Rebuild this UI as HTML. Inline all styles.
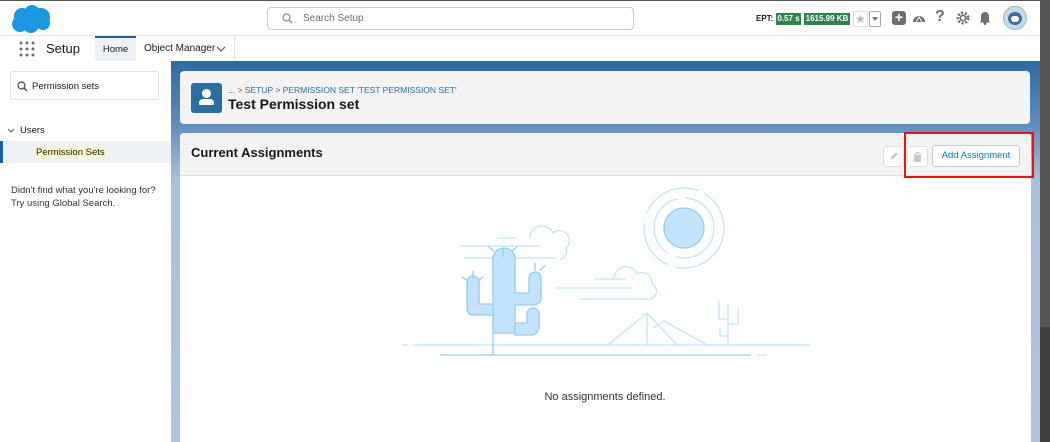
<!DOCTYPE html>
<html><head><meta charset="utf-8"><style>
*{box-sizing:border-box;margin:0;padding:0}
body{width:1050px;height:442px;overflow:hidden;position:relative;background:#fff;font-family:"Liberation Sans",sans-serif;color:#181818}
.abs{position:absolute}
</style></head><body>
<div class="abs" style="left:0;top:0;width:1050px;height:1px;background:#555"></div>
<div class="abs" style="left:0;top:1px;width:1040px;height:35px;background:#fff;border-bottom:1px solid #e5e5e5"></div>
<svg class="abs" style="left:10px;top:4px" width="42" height="30" viewBox="0 0 42 30"><g fill="#1b96e0"><circle cx="12" cy="12" r="8"/><circle cx="22" cy="9" r="8"/><circle cx="31" cy="13" r="9"/><circle cx="10" cy="20" r="8"/><circle cx="21" cy="21" r="8"/><circle cx="33" cy="19" r="7"/></g></svg>
<div class="abs" style="left:267px;top:7px;width:367px;height:23px;border:1px solid #c9c9c9;border-radius:4px"></div>
<svg class="abs" style="left:282px;top:13px" width="11" height="11" viewBox="0 0 11 11"><circle cx="4.5" cy="4.5" r="3.5" fill="none" stroke="#888" stroke-width="1.2"/><path d="M7 7l3 3" stroke="#888" stroke-width="1.3"/></svg>
<div class="abs" style="left:303px;top:13px;font-size:10px;color:#706e6b">Search Setup</div>
<div class="abs" style="left:756px;top:14px;font-size:8px;font-weight:bold">EPT:</div>
<div class="abs" style="left:776px;top:13px;width:25px;height:12px;background:#2e844a;color:#fff;font-size:8px;font-weight:bold;text-align:center;line-height:12px">0.57 s</div>
<div class="abs" style="left:804px;top:13px;width:46px;height:12px;background:#2e844a;color:#fff;font-size:8px;font-weight:bold;text-align:center;line-height:12px">1615.99 KB</div>
<div class="abs" style="left:853px;top:11px;width:15px;height:16px;border:1px solid #ddd;color:#bbb;font-size:12px;text-align:center;line-height:14px">★</div>
<div class="abs" style="left:869px;top:11px;width:12px;height:16px;border:1px solid #aaa;border-radius:2px"></div>
<div class="abs" style="left:872px;top:17px;border-left:3px solid transparent;border-right:3px solid transparent;border-top:4px solid #777"></div>
<div class="abs" style="left:892px;top:11px;width:14px;height:14px;background:#706e6b;border-radius:3px;color:#fff;font-size:14px;line-height:13px;text-align:center;font-weight:bold">+</div>
<svg class="abs" style="left:911px;top:10px" width="16" height="15" viewBox="0 0 16 15"><path d="M2 12a6 6 0 0112 0z" fill="#706e6b"/><path d="M5 12l3-5 3 5" stroke="#fff" fill="none"/></svg>
<div class="abs" style="left:935px;top:8px;font-size:16px;color:#706e6b;font-weight:bold">?</div>
<svg class="abs" style="left:956px;top:11px" width="14" height="14" viewBox="0 0 14 14"><circle cx="7" cy="7" r="5" fill="none" stroke="#706e6b" stroke-width="3" stroke-dasharray="2 1.6"/><circle cx="7" cy="7" r="2.5" fill="none" stroke="#706e6b" stroke-width="1.5"/></svg>
<svg class="abs" style="left:978px;top:10px" width="14" height="15" viewBox="0 0 14 15"><path d="M3 11V6a4 4 0 018 0v5l1.5 1.5h-11z" fill="#706e6b"/><circle cx="7" cy="13.5" r="1.5" fill="#706e6b"/></svg>
<div class="abs" style="left:1003px;top:6px;width:24px;height:24px;border-radius:50%;background:#c5d9ee;border:1px solid #9bb"></div>
<div class="abs" style="left:1008px;top:12px;width:14px;height:13px;border-radius:50%;background:#3a6f9c"></div>
<div class="abs" style="left:1011px;top:16px;width:8px;height:6px;border-radius:3px;background:#fff"></div>
<svg class="abs" style="left:19px;top:41px" width="16" height="16" viewBox="0 0 16 16" fill="#706e6b"><circle cx="2" cy="2" r="1.5"/><circle cx="8" cy="2" r="1.5"/><circle cx="14" cy="2" r="1.5"/><circle cx="2" cy="8" r="1.5"/><circle cx="8" cy="8" r="1.5"/><circle cx="14" cy="8" r="1.5"/><circle cx="2" cy="14" r="1.5"/><circle cx="8" cy="14" r="1.5"/><circle cx="14" cy="14" r="1.5"/></svg>
<div class="abs" style="left:46px;top:41px;font-size:13px">Setup</div>
<div class="abs" style="left:95px;top:36px;width:41px;height:25px;background:#eef1f5;border-top:2px solid #1b5f9e;font-size:9.5px;text-align:center;line-height:23px">Home</div>
<div class="abs" style="left:144px;top:43px;font-size:10px">Object Manager</div>
<svg class="abs" style="left:216px;top:46px" width="10" height="6" viewBox="0 0 10 6"><path d="M1 1l4 4 4-4" fill="none" stroke="#555" stroke-width="1.2"/></svg>
<div class="abs" style="left:234px;top:36px;width:1px;height:25px;background:#e5e5e5"></div>
<div class="abs" style="left:10px;top:71px;width:149px;height:29px;border:1px solid #e0e0e0;border-radius:3px"></div>
<svg class="abs" style="left:17px;top:81px" width="11" height="11" viewBox="0 0 11 11"><circle cx="4.5" cy="4.5" r="3.5" fill="none" stroke="#444" stroke-width="1.2"/><path d="M7 7l3 3" stroke="#444" stroke-width="1.3"/></svg>
<div class="abs" style="left:32px;top:81px;font-size:9.5px">Permission sets</div>
<svg class="abs" style="left:7px;top:128px" width="8" height="6" viewBox="0 0 8 6"><path d="M1 1l3 3 3-3" fill="none" stroke="#555" stroke-width="1"/></svg>
<div class="abs" style="left:20px;top:125px;font-size:9.5px">Users</div>
<div class="abs" style="left:0;top:141px;width:171px;height:22px;background:#eef1f5;border-left:3px solid #1b5f9e"></div>
<div class="abs" style="left:36px;top:147px;font-size:9.5px;background:#fbf8c0">Permission Sets</div>
<div class="abs" style="left:11px;top:184px;font-size:9.5px;line-height:13px;color:#333">Didn't find what you're looking for?<br>Try using Global Search.</div>
<div class="abs" style="left:171px;top:61px;width:869px;height:381px;background:linear-gradient(#2e6aa3 0px,#5c8bbd 60px,#a9c0df 120px,#b0c4e0 381px)"></div>
<div class="abs" style="left:1040px;top:0;width:10px;height:327px;background:#555"></div>
<div class="abs" style="left:1040px;top:327px;width:10px;height:115px;background:#3f3f3f"></div>
<div class="abs" style="left:180px;top:71px;width:850px;height:53px;background:#f3f3f3;border-radius:4px"></div>
<div class="abs" style="left:191px;top:83px;width:31px;height:30px;background:#2a6d9e;border-radius:3px"></div>
<div class="abs" style="left:202px;top:89px;width:9px;height:9px;border-radius:50%;background:#fff"></div>
<div class="abs" style="left:199px;top:99px;width:15px;height:6px;border-radius:4px 4px 1px 1px;background:#fff"></div>
<div class="abs" style="left:228px;top:85px;font-size:8.5px;color:#2a6d9e"><span style="color:#555">... &gt; </span>SETUP<span style="color:#555"> &gt; </span>PERMISSION SET 'TEST PERMISSION SET'</div>
<div class="abs" style="left:228px;top:96px;font-size:14px;font-weight:bold">Test Permission set</div>
<div class="abs" style="left:180px;top:133px;width:851px;height:309px;background:#fff;border-radius:4px 4px 0 0;overflow:hidden">
  <div style="height:43px;background:#f3f3f3;border-bottom:1px solid #ddd"></div>
</div>
<div class="abs" style="left:191px;top:145px;font-size:13px;font-weight:bold">Current Assignments</div>
<div class="abs" style="left:883px;top:146px;width:21px;height:21px;border:1px solid #e0e0e0;border-radius:3px;background:#fff"></div>
<svg class="abs" style="left:888px;top:151px" width="11" height="11" viewBox="0 0 11 11"><path d="M2 9l1-3 5-5 2 2-5 5z" fill="#c9c9c9"/></svg>
<div class="abs" style="left:907px;top:146px;width:21px;height:21px;border:1px solid #e0e0e0;border-radius:3px;background:#fff"></div>
<svg class="abs" style="left:913px;top:152px" width="9" height="10" viewBox="0 0 9 10"><path d="M0 1.5h9M3 1.5V0h3v1.5M1 3h7l-.6 7H1.6z" fill="#c9c9c9" stroke="#c9c9c9" stroke-width=".6"/></svg>
<div class="abs" style="left:932px;top:145px;width:88px;height:22px;border:1px solid #c9c9c9;border-radius:3px;background:#fff;font-size:9.5px;color:#0176d3;text-align:center;line-height:20px">Add Assignment</div>
<div class="abs" style="left:904px;top:132px;width:130px;height:46px;border:2px solid #e4141d"></div>
<svg class="abs" style="left:390px;top:180px" width="430" height="180" viewBox="0 0 430 180" fill="none" stroke-linecap="round">
 <g stroke="#c2e3fb" stroke-width="1.3">
  <path d="M12 165h6M24 165h396"/>
  <path d="M368 175h8"/>
  <circle cx="294" cy="48" r="40" stroke-dasharray="70 10 50 12 60 8"/>
  <circle cx="294" cy="48" r="30" stroke-dasharray="55 10 70 8"/>
  <path d="M70 66h80M108 58h18M75 78h90M140 58a12 12 0 0123 -5a9 9 0 0113 15a8 8 0 01-6 11"/>
  <path d="M205 99h30M167 108h20M182 108h60M190 119h72M224 99a12 12 0 0123-5a10 10 0 0115 10a8 8 0 01-2 15"/>
  <path d="M218 165l39-32 30 32M257 133v32M264 148l10-7 43 24"/>
  <path d="M338 165v-40M329 121v18h9M348 129v15h-10M330 149v7h8"/>
 </g>
 <g stroke="#8fcdf4" stroke-width="1.3" fill="#c2e3fb">
  <circle cx="294" cy="48" r="20"/>
  <path d="M103 175v-96a11 11 0 0122 0v34h14v-15a6 6 0 0112 0v20a7 7 0 01-7 7h-19v28h-22z"/>
  <path d="M103 135h-20a6 6 0 01-6-6v-27a6 6 0 0112 0v22h14z"/>
  <path d="M125 143h12v-9a6 6 0 0112 0v13a8 8 0 01-8 8h-16z"/>
  <path d="M113 76v-8M104 71l-5-4M122 71l5-4M83 98v-7M78 101l-6-4M88 101l5-4M145 90v-7M150 90l5-4" fill="none"/>
  <path d="M50 175h310" fill="none"/>
 </g>
</svg>
<div class="abs" style="left:0;top:391px;width:1210px;text-align:center;font-size:11px;color:#333">No assignments defined.</div>
</body></html>
